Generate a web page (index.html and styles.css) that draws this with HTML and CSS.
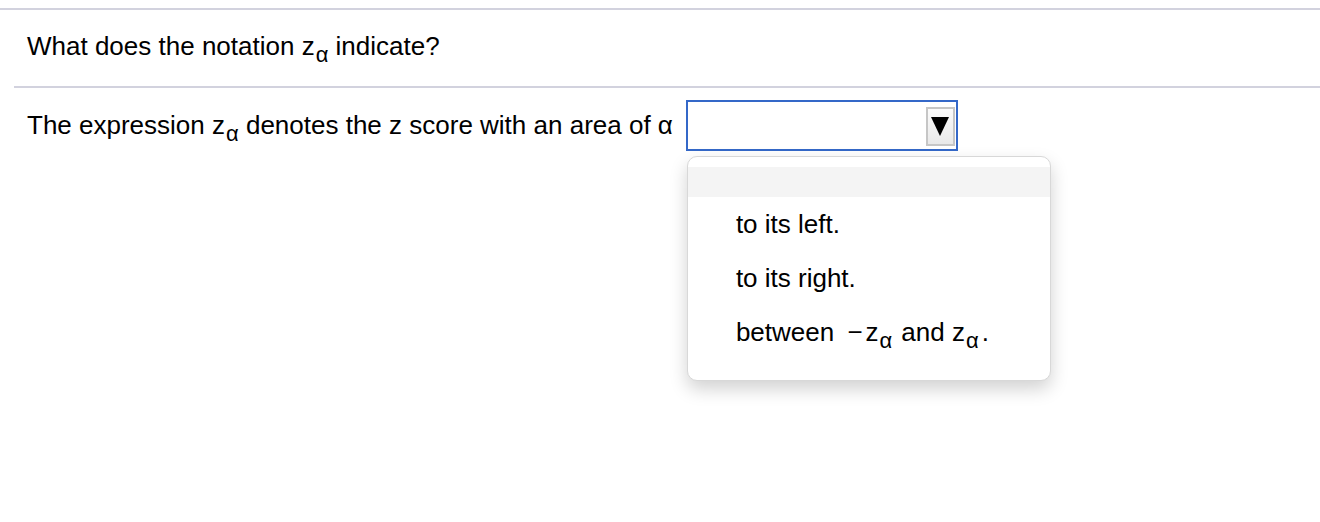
FILE: index.html
```html
<!DOCTYPE html>
<html>
<head>
<meta charset="utf-8">
<link rel="stylesheet" href="styles.css">
</head>
<body>
<div class="page">
  <div class="question">What does the notation z<span class="sub">α</span> indicate?</div>
  <div class="answer">
    <div class="stem">The expression z<span class="sub">α</span> denotes the z score with an area of α</div>
    <div class="select-col">
      <div class="select">
        <div class="btn"><div class="tri"></div></div>
      </div>
      <div class="menu">
        <div class="opt blank"></div>
        <div class="opt">to its left.</div>
        <div class="opt">to its right.</div>
        <div class="opt">between <span class="minus">−</span>z<span class="sub">α</span><span class="sp"></span>and z<span class="sub">α</span><span class="dot">.</span></div>
      </div>
    </div>
  </div>
</div>
</body>
</html>
```
FILE: styles.css
```css
html, body {
  margin: 0;
  padding: 0;
  background: #fff;
}
body {
  font-family: "Liberation Sans", Arial, sans-serif;
  font-size: 26px;
  color: #000;
  min-height: 522px;
}
.page {
  padding: 8px 0 60px;
}
.question {
  border-top: 2px solid #d2d2de;
  padding: 21px 0 0 27px;
  height: 55px;
  line-height: 30px;
}
.sub {
  font-size: 22px;
  position: relative;
  top: 7px;
  margin-left: 1px;
}
.answer {
  margin-left: 14px;
  border-top: 2px solid #d2d2de;
  padding: 12px 0 0 13px;
  display: flex;
  align-items: flex-start;
  gap: 13px;
}
.stem {
  margin-top: 10px;
  line-height: 30px;
  white-space: nowrap;
}
.select-col {
  display: flex;
  flex-direction: column;
}
.select {
  width: 267px;
  height: 42px;
  border: 2px solid #3468c8;
  display: flex;
  justify-content: flex-end;
  align-items: flex-start;
  padding: 5px 1px 0 0;
  box-sizing: content-box;
}
.btn {
  width: 25px;
  height: 35px;
  border: 2px solid #c6c6c6;
  background: linear-gradient(#fbfbfb, #e9e9e9);
  display: flex;
  justify-content: center;
  align-items: center;
}
.tri {
  width: 0;
  height: 0;
  border-left: 9px solid transparent;
  border-right: 9px solid transparent;
  border-top: 19px solid #000;
}
.menu {
  margin-top: 5px;
  margin-left: 1px;
  width: 362px;
  border: 1px solid #d8d8d8;
  border-radius: 10px;
  background: #fff;
  box-shadow: 0 8px 18px rgba(0, 0, 0, 0.18);
  padding: 10px 0 21px;
}
.opt {
  height: 54px;
  line-height: 54px;
  padding-left: 48px;
  white-space: nowrap;
}
.opt.blank {
  height: 30px;
  background: #f4f4f4;
}
.minus {
  margin-left: 6px;
  margin-right: 3px;
}
.sp {
  display: inline-block;
  width: 9px;
}
.dot {
  margin-left: 3px;
}
```
